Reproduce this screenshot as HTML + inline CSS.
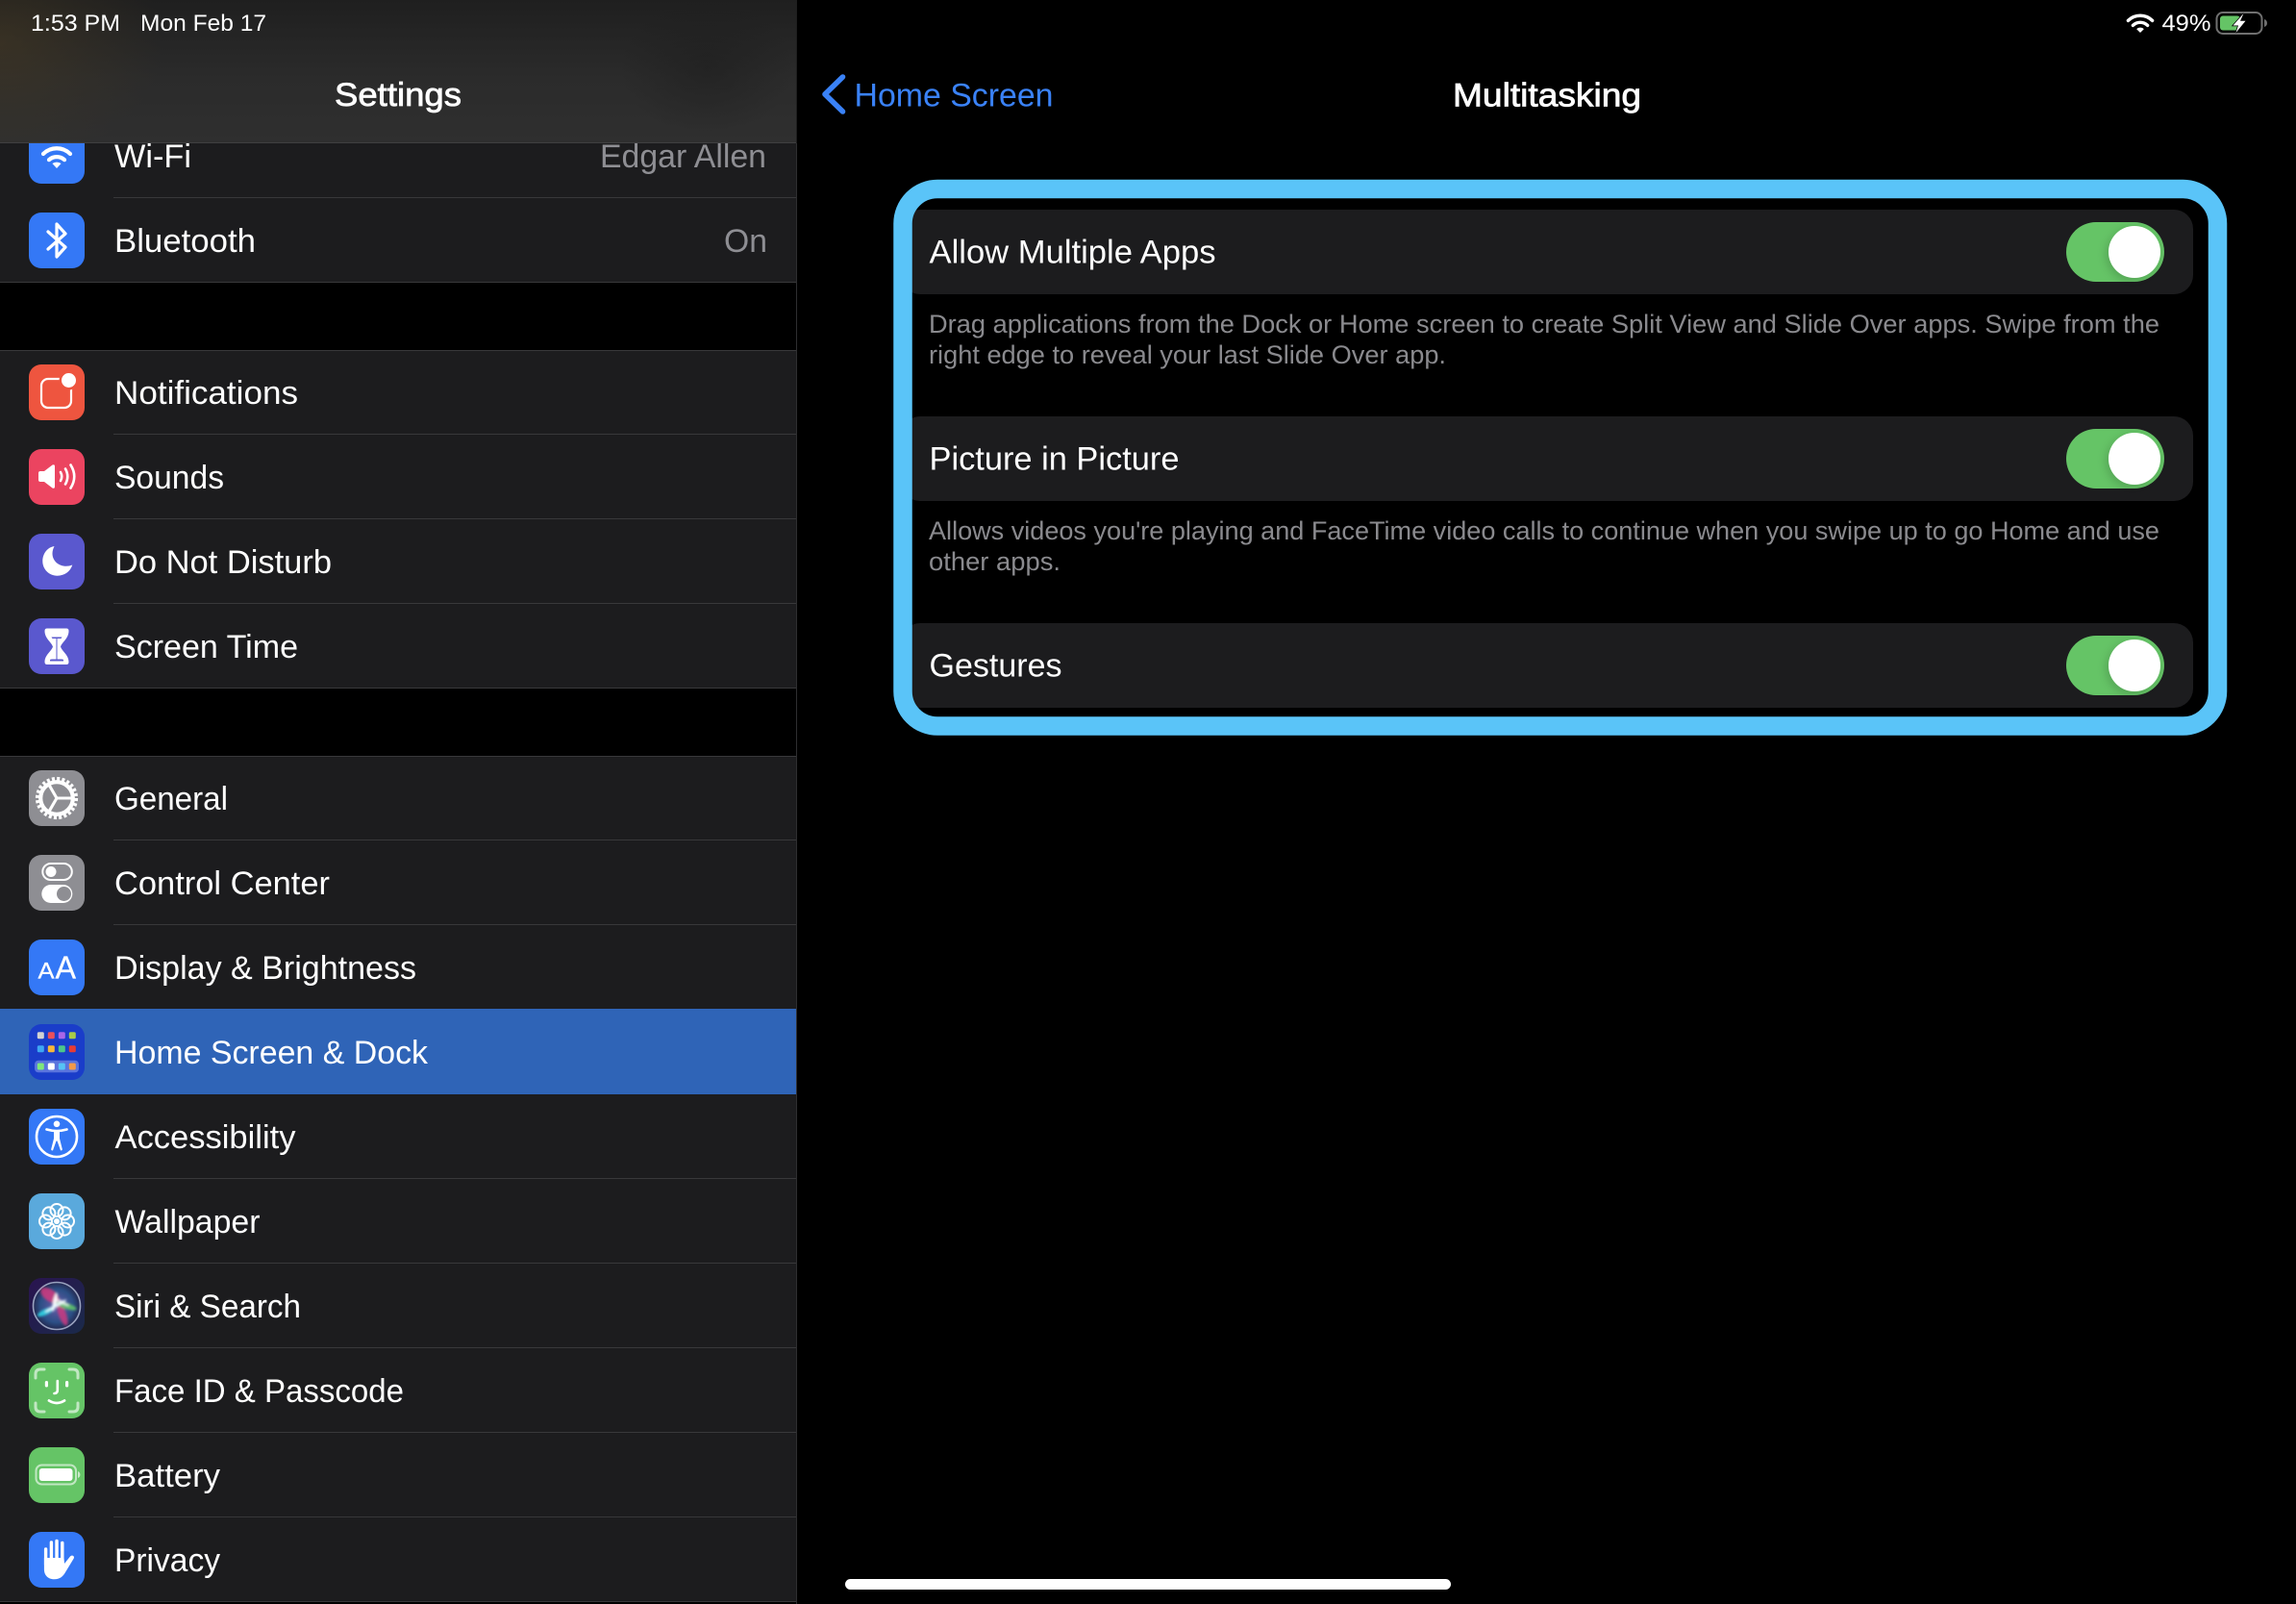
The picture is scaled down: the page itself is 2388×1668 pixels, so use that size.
<!DOCTYPE html>
<html lang="en">
<head>
<meta charset="utf-8">
<title>Multitasking</title>
<style>
html,body{margin:0;padding:0;background:#000;width:2388px;height:1668px;overflow:hidden}
svg{display:block}
text{font-family:"Liberation Sans",Arial,sans-serif}
.r{font-size:34.5px;fill:#fff}
.v{font-size:34.5px;fill:#8e8e93}
.d{font-size:26.5px;fill:#8a8a8e}
.s{font-size:24.5px;fill:#fff}
.n{font-size:34.5px;fill:#fff;stroke:#fff;stroke-width:.75px}
.sep{fill:#38383a}
.w{fill:none;stroke:#fff;stroke-linecap:round;stroke-linejoin:round}
</style>
</head>
<body>
<svg width="2388" height="1668" viewBox="0 0 2388 1668" xmlns="http://www.w3.org/2000/svg">
<defs>
<linearGradient id="nav" x1="0" y1="0" x2="0" y2="1"><stop offset="0" stop-color="#1f1f1f"/><stop offset=".55" stop-color="#2b2b2b"/><stop offset="1" stop-color="#2f2f2f"/></linearGradient>
<radialGradient id="brown" cx="0" cy=".3" r=".85"><stop offset="0" stop-color="#4a3c22" stop-opacity=".5"/><stop offset=".55" stop-color="#4a3c22" stop-opacity=".2"/><stop offset="1" stop-color="#4a3c22" stop-opacity="0"/></radialGradient>
<radialGradient id="blob" cx=".5" cy=".5" r=".5"><stop offset="0" stop-color="#1c1c1c" stop-opacity=".5"/><stop offset="1" stop-color="#1c1c1c" stop-opacity="0"/></radialGradient>
<linearGradient id="siribg" x1="0" y1="0" x2="1" y2="1"><stop offset="0" stop-color="#2a1450"/><stop offset="1" stop-color="#1a2a4a"/></linearGradient>
<radialGradient id="siri" cx=".5" cy=".5" r=".5"><stop offset="0" stop-color="#6a5aa8"/><stop offset=".7" stop-color="#2c4f86"/><stop offset="1" stop-color="#23284f"/></radialGradient>
<filter id="ks" x="-30%" y="-30%" width="160%" height="160%"><feDropShadow dx="-2" dy="3" stdDeviation="5" flood-color="#000" flood-opacity=".18"/></filter>
<filter id="blur1" x="-30%" y="-30%" width="160%" height="160%"><feGaussianBlur stdDeviation="1.2"/></filter>
</defs>

<rect width="2388" height="1668" fill="#000"/>

<!-- sidebar -->
<rect x="0" y="149" width="828" height="56" fill="#1c1c1e"/>
<rect x="0" y="205" width="828" height="88" fill="#1c1c1e"/>
<rect x="0" y="364" width="828" height="351" fill="#1c1c1e"/>
<rect x="0" y="786" width="828" height="879" fill="#1c1c1e"/>
<rect x="0" y="1049" width="828" height="89" fill="#2f64b7"/>
<rect x="118" y="205" width="710" height="1" class="sep"/>
<rect x="0" y="293" width="828" height="1" class="sep"/>
<rect x="0" y="364" width="828" height="1" class="sep"/>
<rect x="118" y="451" width="710" height="1" class="sep"/>
<rect x="118" y="539" width="710" height="1" class="sep"/>
<rect x="118" y="627" width="710" height="1" class="sep"/>
<rect x="0" y="715" width="828" height="1" class="sep"/>
<rect x="0" y="786" width="828" height="1" class="sep"/>
<rect x="118" y="873" width="710" height="1" class="sep"/>
<rect x="118" y="961" width="710" height="1" class="sep"/>
<rect x="118" y="1225" width="710" height="1" class="sep"/>
<rect x="118" y="1313" width="710" height="1" class="sep"/>
<rect x="118" y="1401" width="710" height="1" class="sep"/>
<rect x="118" y="1489" width="710" height="1" class="sep"/>
<rect x="118" y="1577" width="710" height="1" class="sep"/>
<rect x="0" y="1665" width="828" height="1" class="sep"/>
<rect x="828" y="0" width="1" height="1668" fill="#2e2e30"/>

<!-- row labels -->
<text class="r" x="119" y="174" textLength="80" lengthAdjust="spacingAndGlyphs">Wi-Fi</text>
<text class="v" x="624" y="174" textLength="173" lengthAdjust="spacingAndGlyphs">Edgar Allen</text>
<text class="r" x="119" y="262" textLength="147" lengthAdjust="spacingAndGlyphs">Bluetooth</text>
<text class="v" x="753" y="262" textLength="45" lengthAdjust="spacingAndGlyphs">On</text>
<text class="r" x="119" y="420" textLength="191" lengthAdjust="spacingAndGlyphs">Notifications</text>
<text class="r" x="119" y="508" textLength="114" lengthAdjust="spacingAndGlyphs">Sounds</text>
<text class="r" x="119" y="596" textLength="226" lengthAdjust="spacingAndGlyphs">Do Not Disturb</text>
<text class="r" x="119" y="684" textLength="191" lengthAdjust="spacingAndGlyphs">Screen Time</text>
<text class="r" x="119" y="842" textLength="118" lengthAdjust="spacingAndGlyphs">General</text>
<text class="r" x="119" y="930" textLength="224" lengthAdjust="spacingAndGlyphs">Control Center</text>
<text class="r" x="119" y="1018" textLength="314" lengthAdjust="spacingAndGlyphs">Display &amp; Brightness</text>
<text class="r" x="119" y="1106" textLength="326" lengthAdjust="spacingAndGlyphs">Home Screen &amp; Dock</text>
<text class="r" x="119.5" y="1194" textLength="188" lengthAdjust="spacingAndGlyphs">Accessibility</text>
<text class="r" x="119.5" y="1282" textLength="151" lengthAdjust="spacingAndGlyphs">Wallpaper</text>
<text class="r" x="119" y="1370" textLength="194" lengthAdjust="spacingAndGlyphs">Siri &amp; Search</text>
<text class="r" x="119" y="1458" textLength="301" lengthAdjust="spacingAndGlyphs">Face ID &amp; Passcode</text>
<text class="r" x="119" y="1546" textLength="110" lengthAdjust="spacingAndGlyphs">Battery</text>
<text class="r" x="119" y="1634" textLength="110" lengthAdjust="spacingAndGlyphs">Privacy</text>

<!-- Wi-Fi icon -->
<g transform="translate(30,133)">
<rect width="58" height="58" rx="13" fill="#3478f6"/>
<g transform="translate(29,42)">
<path class="w" stroke-width="4.2" d="M-14 -15A20 20 0 0 1 14 -15"/>
<path class="w" stroke-width="4.2" d="M-8 -8.8A12 12 0 0 1 8 -8.8"/>
<path fill="#fff" d="M0 0L-4.6 -5Q0 -7.8 4.6 -5Z"/>
</g>
</g>
<!-- Bluetooth -->
<g transform="translate(30,221)">
<rect width="58" height="58" rx="13" fill="#3478f6"/>
<path class="w" stroke-width="3.2" d="M20 20L38 36L29 46V12L38 22L20 38"/>
</g>
<!-- Notifications -->
<g transform="translate(30,379)">
<rect width="58" height="58" rx="13" fill="#ee553f"/>
<rect x="13" y="15" width="31" height="30" rx="7" fill="none" stroke="#fff" stroke-width="2.2"/>
<circle cx="41.5" cy="16.5" r="10" fill="#ee553f"/>
<circle cx="41.5" cy="16.5" r="7.5" fill="#fff"/>
</g>
<!-- Sounds -->
<g transform="translate(30,467)">
<rect width="58" height="58" rx="13" fill="#eb4460"/>
<path fill="#fff" d="M10 25Q10 23 12 23H16L24.5 16.5Q27 15.5 27 18V39Q27 41.5 24.5 40.5L16 34H12Q10 34 10 32Z"/>
<path class="w" stroke-width="2.6" d="M33 24Q35.5 28.5 33 33"/>
<path class="w" stroke-width="2.6" d="M38 20.5Q42.5 28.5 38 36.5"/>
<path class="w" stroke-width="2.6" d="M43.5 16.5Q51 28.5 43.5 40.5"/>
</g>
<!-- Do Not Disturb -->
<g transform="translate(30,555)">
<rect width="58" height="58" rx="13" fill="#5a58ce"/>
<path fill="#fff" d="M26.5 13C18 14.5 14.3 22 14.3 28.5C14.3 37 21 43.7 29.5 43.7C37 43.7 43 39.5 45.3 32.5C35 36.5 24.5 30.5 24.5 20.5C24.5 18 25.3 15.5 26.5 13Z"/>
</g>
<!-- Screen Time -->
<g transform="translate(30,643)">
<rect width="58" height="58" rx="13" fill="#5a58ce"/>
<path fill="#fff" d="M19 10.5H39Q41.5 10.5 41.5 13C41.5 21 35 24 33 29.5C35 35 41.5 38 41.5 45.5Q41.5 48 39 48H19Q16.5 48 16.5 45.5C16.5 38 23 35 25 29.5C23 24 16.5 21 16.5 13Q16.5 10.5 19 10.5Z"/>
<path fill="#5a58ce" d="M23.5 19.5H34.5L33.5 21H24.5ZM28.5 21H29.5V43.5H28.5ZM22 43.5Q22 42.5 24 42.5H34Q36 42.5 36 43.5V44.5H22Z"/>
</g>
<!-- General -->
<g transform="translate(30,801)">
<rect width="58" height="58" rx="13" fill="#8e8e93"/>
<circle cx="29" cy="29" r="20.2" fill="none" stroke="#fff" stroke-width="3.8" stroke-dasharray="3 2.29"/>
<circle cx="29" cy="29" r="16.8" fill="none" stroke="#fff" stroke-width="4.2"/>
<path class="w" stroke-width="3.1" d="M29 29H46M29 29L20.5 14.3M29 29L20.5 43.7"/>
</g>
<!-- Control Center -->
<g transform="translate(30,889)">
<rect width="58" height="58" rx="13" fill="#8e8e93"/>
<rect x="14.3" y="9" width="30.5" height="17" rx="8.5" fill="none" stroke="#fff" stroke-width="2"/>
<circle cx="23" cy="17.5" r="5.5" fill="#fff"/>
<rect x="13.3" y="31" width="32" height="19" rx="9.5" fill="#fff"/>
<circle cx="36.5" cy="40.5" r="7.5" fill="#8e8e93"/>
</g>
<!-- Display -->
<g transform="translate(30,977)">
<rect width="58" height="58" rx="13" fill="#3478f6"/>
<text x="9.5" y="40.5" font-size="24" fill="#fff" stroke="#fff" stroke-width=".3" textLength="17" lengthAdjust="spacingAndGlyphs">A</text>
<text x="27.5" y="40.5" font-size="33" fill="#fff" stroke="#fff" stroke-width=".3" textLength="21.5" lengthAdjust="spacingAndGlyphs">A</text>
</g>
<!-- Home Screen -->
<g transform="translate(30,1065)">
<rect width="58" height="58" rx="13" fill="#1a3dc9"/>
<rect x="6" y="37.7" width="46" height="12.6" rx="4" fill="#5a74dd"/>
<g>
<rect x="8.8" y="8.2" width="7" height="7" rx="1.6" fill="#d2d2d2"/><rect x="19.8" y="8.2" width="7" height="7" rx="1.6" fill="#e9505a"/><rect x="30.8" y="8.2" width="7" height="7" rx="1.6" fill="#a966e8"/><rect x="41.8" y="8.2" width="7" height="7" rx="1.6" fill="#a8cc48"/>
<rect x="8.8" y="22.2" width="7" height="7" rx="1.6" fill="#3ea7f4"/><rect x="19.8" y="22.2" width="7" height="7" rx="1.6" fill="#f6b83a"/><rect x="30.8" y="22.2" width="7" height="7" rx="1.6" fill="#4cc78a"/><rect x="41.8" y="22.2" width="7" height="7" rx="1.6" fill="#e73c35"/>
<rect x="8.8" y="40.5" width="7" height="7" rx="1.6" fill="#7fe87b"/><rect x="19.8" y="40.5" width="7" height="7" rx="1.6" fill="#fff"/><rect x="30.8" y="40.5" width="7" height="7" rx="1.6" fill="#56c3f5"/><rect x="41.8" y="40.5" width="7" height="7" rx="1.6" fill="#f29a4a"/>
</g>
</g>
<!-- Accessibility -->
<g transform="translate(30,1153)">
<rect width="58" height="58" rx="13" fill="#3478f6"/>
<circle cx="29" cy="29" r="21" fill="none" stroke="#fff" stroke-width="2.6"/>
<circle cx="29" cy="15.8" r="3.3" fill="#fff"/>
<path class="w" stroke-width="2.6" d="M18.5 21.5Q29 24.5 39.5 21.5"/>
<path fill="#fff" d="M26 22.5H32L32 31L34.8 42Q34.8 43.6 33 43.4L29.5 33.5H28.5L25 43.4Q23.2 43.6 23.2 42L26 31Z"/>
</g>
<!-- Wallpaper -->
<g transform="translate(30,1241)">
<rect width="58" height="58" rx="13" fill="#5aa9dc"/>
<g fill="none" stroke="#fff" stroke-width="2">
<circle cx="29" cy="17.5" r="6.5"/><circle cx="29" cy="40.5" r="6.5"/><circle cx="17.5" cy="29" r="6.5"/><circle cx="40.5" cy="29" r="6.5"/>
<circle cx="20.9" cy="20.9" r="6.5"/><circle cx="37.1" cy="20.9" r="6.5"/><circle cx="20.9" cy="37.1" r="6.5"/><circle cx="37.1" cy="37.1" r="6.5"/>
</g>
<circle cx="29" cy="29" r="3" fill="#fff"/>
</g>
<!-- Siri -->
<g transform="translate(30,1329)">
<rect width="58" height="58" rx="13" fill="url(#siribg)"/>
<circle cx="29" cy="29" r="24.5" fill="url(#siri)" stroke="#9aa3c0" stroke-width="1.6"/>
<g filter="url(#blur1)">
<ellipse cx="22" cy="18" rx="11" ry="6" fill="#d4397f" opacity=".85" transform="rotate(35 22 18)"/>
<ellipse cx="35" cy="38" rx="4" ry="12" fill="#cc3a80" opacity=".85" transform="rotate(-20 35 38)"/>
<ellipse cx="39" cy="29" rx="11" ry="3.2" fill="#5fc46a" opacity=".9" transform="rotate(18 39 29)"/>
<ellipse cx="18" cy="35" rx="10" ry="3" fill="#2fd0e0" opacity=".95" transform="rotate(-25 18 35)"/>
<ellipse cx="27" cy="25" rx="2" ry="10" fill="#fff" opacity=".95" transform="rotate(12 27 25)"/>
<ellipse cx="28" cy="29" rx="13" ry="1.6" fill="#e8fbff" opacity=".95" transform="rotate(-30 28 29)"/>
<ellipse cx="34" cy="25" rx="9" ry="1.8" fill="#fff" opacity=".7" transform="rotate(25 34 25)"/>
</g>
</g>
<!-- Face ID -->
<g transform="translate(30,1417)">
<rect width="58" height="58" rx="13" fill="#65c466"/>
<g fill="none" stroke="#fff" stroke-opacity=".6" stroke-width="3" stroke-linecap="round">
<path d="M7 16V12Q7 7 12 7H16"/><path d="M42 7H46Q51 7 51 12V16"/><path d="M7 42V46Q7 51 12 51H16"/><path d="M51 42V46Q51 51 46 51H42"/>
</g>
<rect x="16.8" y="19" width="3.2" height="6.5" rx="1.6" fill="#fff"/>
<rect x="38" y="19" width="3.2" height="6.5" rx="1.6" fill="#fff"/>
<path class="w" stroke-width="2.6" d="M29.8 19V28.5Q29.8 32 26.5 32"/>
<path class="w" stroke-width="2.8" d="M21 39.5Q29 44.5 37 39.5"/>
</g>
<!-- Battery -->
<g transform="translate(30,1505)">
<rect width="58" height="58" rx="13" fill="#65c466"/>
<rect x="7.5" y="18.5" width="41.5" height="20" rx="6" fill="none" stroke="#fff" stroke-opacity=".6" stroke-width="2"/>
<rect x="10.8" y="22" width="34.7" height="13" rx="3" fill="#fff"/>
<path fill="#fff" fill-opacity=".65" d="M51 25Q53.4 26 53.4 28.5Q53.4 31 51 32Z"/>
</g>
<!-- Privacy -->
<g transform="translate(30,1593)">
<rect width="58" height="58" rx="13" fill="#3478f6"/>
<path class="w" stroke-width="3.4" d="M17.6 18V34"/>
<path class="w" stroke-width="3.4" d="M23.4 11V32"/>
<path class="w" stroke-width="3.4" d="M29 9.5V32"/>
<path class="w" stroke-width="3.4" d="M34.8 11.5V34"/>
<path fill="#fff" d="M15.9 27V39C15.9 45.5 20.5 49.3 26.5 49.3C32 49.3 35.5 46.5 38 42L46.8 27.5C47.8 25 44.8 23.6 43 25.5L37 33L36.5 27Z"/>
</g>

<!-- nav bar -->
<rect x="0" y="0" width="828" height="148" fill="url(#nav)"/>
<rect x="0" y="0" width="200" height="148" fill="url(#brown)"/>
<ellipse cx="735" cy="70" rx="90" ry="70" fill="url(#blob)"/>
<rect x="0" y="148" width="828" height="1" fill="#3f3f41"/>
<rect x="828" y="0" width="1" height="149" fill="#1e1e1e"/>
<text class="s" x="32" y="32" textLength="93" lengthAdjust="spacingAndGlyphs">1:53 PM</text>
<text class="s" x="146" y="32" textLength="131" lengthAdjust="spacingAndGlyphs">Mon Feb 17</text>
<text class="n" x="348" y="110" textLength="132" lengthAdjust="spacingAndGlyphs">Settings</text>

<!-- detail header -->
<path fill="none" stroke="#3a82f7" stroke-width="5.6" stroke-linecap="round" stroke-linejoin="round" d="M876.5 80L858 98L876.5 116"/>
<text x="888.5" y="110.5" font-size="34.5" fill="#3a82f7" textLength="207" lengthAdjust="spacingAndGlyphs">Home Screen</text>
<text class="n" x="1511" y="110.5" textLength="196" lengthAdjust="spacingAndGlyphs">Multitasking</text>

<!-- status right -->
<g transform="translate(2226,34)">
<path class="w" stroke-width="3.4" d="M-12.6 -12.6A18 18 0 0 1 12.6 -12.6" stroke-linecap="butt"/>
<path class="w" stroke-width="3.4" d="M-7.6 -7.6A11 11 0 0 1 7.6 -7.6" stroke-linecap="butt"/>
<path fill="#fff" d="M0 0L-3.8 -3.8A5.4 5.4 0 0 1 3.8 -3.8Z"/>
</g>
<text class="s" x="2248.5" y="32" textLength="51" lengthAdjust="spacingAndGlyphs">49%</text>
<rect x="2305.5" y="13" width="47" height="22" rx="6.5" fill="none" stroke="#707070" stroke-width="2"/>
<path fill="#707070" d="M2355 20Q2358 21 2358 24Q2358 27 2355 28Z"/>
<rect x="2309" y="16.5" width="21" height="15" rx="3" fill="#65c466"/>
<path fill="#fff" stroke="#000" stroke-width="1.5" paint-order="stroke" d="M2333.5 14L2322.5 26.5H2328L2325.5 34L2335.5 21.8H2330Z"/>

<!-- cards -->
<rect x="937" y="218" width="1344" height="88" rx="20" fill="#1c1c1e"/>
<rect x="937" y="433" width="1344" height="88" rx="20" fill="#1c1c1e"/>
<rect x="937" y="648" width="1344" height="88" rx="20" fill="#1c1c1e"/>

<text class="r" x="966.5" y="273.5" textLength="298" lengthAdjust="spacingAndGlyphs">Allow Multiple Apps</text>
<text class="r" x="966.5" y="488.5" textLength="260" lengthAdjust="spacingAndGlyphs">Picture in Picture</text>
<text class="r" x="966.5" y="703.5" textLength="138" lengthAdjust="spacingAndGlyphs">Gestures</text>

<text class="d" x="966" y="346" textLength="1280" lengthAdjust="spacingAndGlyphs">Drag applications from the Dock or Home screen to create Split View and Slide Over apps. Swipe from the</text>
<text class="d" x="966" y="378" textLength="538" lengthAdjust="spacingAndGlyphs">right edge to reveal your last Slide Over app.</text>
<text class="d" x="966" y="561" textLength="1280" lengthAdjust="spacingAndGlyphs">Allows videos you're playing and FaceTime video calls to continue when you swipe up to go Home and use</text>
<text class="d" x="966" y="593" textLength="137" lengthAdjust="spacingAndGlyphs">other apps.</text>

<!-- toggles -->
<g>
<rect x="2149" y="231" width="102" height="62" rx="31" fill="#65c466"/>
<circle cx="2220" cy="262" r="27" fill="#fff" filter="url(#ks)"/>
<rect x="2149" y="446" width="102" height="62" rx="31" fill="#65c466"/>
<circle cx="2220" cy="477" r="27" fill="#fff" filter="url(#ks)"/>
<rect x="2149" y="661" width="102" height="62" rx="31" fill="#65c466"/>
<circle cx="2220" cy="692" r="27" fill="#fff" filter="url(#ks)"/>
</g>

<!-- highlight frame -->
<rect x="939" y="196.5" width="1367.5" height="558.5" rx="36" fill="none" stroke="#5ac4f8" stroke-width="19.5"/>

<!-- home indicator -->
<rect x="879" y="1642" width="630" height="11" rx="5.5" fill="#fff"/>
</svg>
</body>
</html>
